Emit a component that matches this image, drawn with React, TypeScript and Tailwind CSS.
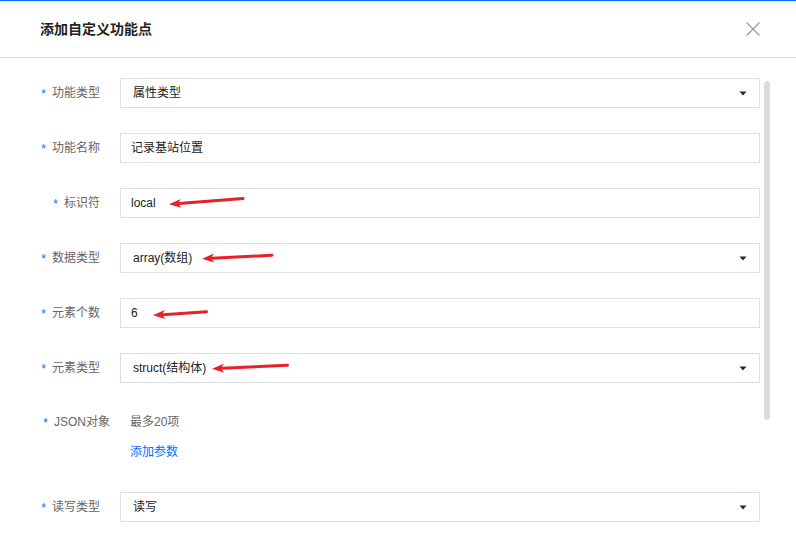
const font = { fontFamily: '"Liberation Sans", "Noto Sans CJK SC", sans-serif' };

type Field = {
  label: string;
  value: string;
  select?: boolean;
};

const fields: Field[] = [
  { label: '功能类型', value: '属性类型', select: true },
  { label: '功能名称', value: '记录基站位置' },
  { label: '标识符', value: 'local' },
  { label: '数据类型', value: 'array(数组)', select: true },
  { label: '元素个数', value: '6' },
  { label: '元素类型', value: 'struct(结构体)', select: true },
];

const Caret = () => (
  <svg width="8" height="5" viewBox="0 0 8 5" className="shrink-0">
    <polygon points="0.5,0.5 7.5,0.5 4,4.5" fill="#1f2937" />
  </svg>
);

const CloseIcon = () => (
  <svg width="14" height="14" viewBox="0 0 14 14">
    <path d="M0.5 0.5 L13.5 13.5 M13.5 0.5 L0.5 13.5" stroke="#9a9a9a" strokeWidth="1.2" fill="none" />
  </svg>
);

const Label = ({ text, width = 'w-[100px]' }: { text: string; width?: string }) => (
  <div className={`${width} h-[30px] shrink-0 flex items-center justify-end text-[12px] text-[#666]`}>
    <span className="text-[#006eff] text-[12px] leading-none translate-y-[1px] mr-[6px]">*</span>
    <span>{text}</span>
  </div>
);

const Row = ({ field }: { field: Field }) => (
  <div className="flex items-start">
    <Label text={field.label} />
    <div
      className={`ml-[20px] w-[640px] h-[30px] border border-[#dcdfe6] flex items-center justify-between text-[12px] text-[#222] ${
        field.select ? 'pl-[12px] pr-[12px]' : 'pl-[10px] pr-[10px]'
      }`}
    >
      <span>{field.value}</span>
      {field.select && <Caret />}
    </div>
  </div>
);

const Arrow = ({ x1, y1, x2, y2 }: { x1: number; y1: number; x2: number; y2: number }) => {
  // tail (x1,y1) -> tip (x2,y2)
  const dx = x2 - x1;
  const dy = y2 - y1;
  const len = Math.sqrt(dx * dx + dy * dy);
  const ux = dx / len;
  const uy = dy / len;
  const hx = x2 - ux * 12;
  const hy = y2 - uy * 12;
  const px = -uy * 4.5;
  const py = ux * 4.5;
  return (
    <g>
      <line x1={x1} y1={y1} x2={hx + ux * 2} y2={hy + uy * 2} stroke="#e8202a" strokeWidth="3" strokeLinecap="round" />
      <polygon
        points={`${x2},${y2} ${hx + px},${hy + py} ${hx + ux * 3},${hy + uy * 3} ${hx - px},${hy - py}`}
        fill="#e8202a"
      />
    </g>
  );
};

export default function App() {
  return (
    <div className="relative w-[796px] h-[540px] overflow-hidden bg-white border-t border-[#006eff]" style={font}>
      <div className="h-[57px] border-b border-[#dcdfe6] flex items-center justify-between pl-[40px] pr-[36px]">
        <h1 className="text-[14px] font-bold text-[#222]">添加自定义功能点</h1>
        <CloseIcon />
      </div>

      <div className="pt-[20px] flex flex-col gap-[25px]">
        {fields.map((f) => (
          <Row key={f.label} field={f} />
        ))}

        <div className="flex items-start">
          <div className="w-[110px] h-[28px] shrink-0 flex items-center justify-end text-[12px] text-[#666]">
            <span className="text-[#006eff] text-[12px] leading-none translate-y-[1px] mr-[6px]">*</span>
            <span>JSON对象</span>
          </div>
          <div className="ml-[20px] flex flex-col text-[12px]">
            <div className="h-[28px] flex items-center text-[#666]">最多20项</div>
            <div className="h-[31px] flex items-center text-[#006eff]">添加参数</div>
          </div>
        </div>

        <Row field={{ label: '读写类型', value: '读写', select: true }} />
      </div>

      <div className="absolute left-[764px] top-[80px] w-[6px] h-[339px] rounded-full bg-[#dcdcdc]" />

      <svg className="absolute inset-0 pointer-events-none" width="796" height="540">
        <Arrow x1={243} y1={197.5} x2={169} y2={203.3} />
        <Arrow x1={272} y1={254.3} x2={202} y2={257.7} />
        <Arrow x1={206.5} y1={310.7} x2={153} y2={314.3} />
        <Arrow x1={287.5} y1={364.3} x2={212} y2={367.7} />
      </svg>
    </div>
  );
}
